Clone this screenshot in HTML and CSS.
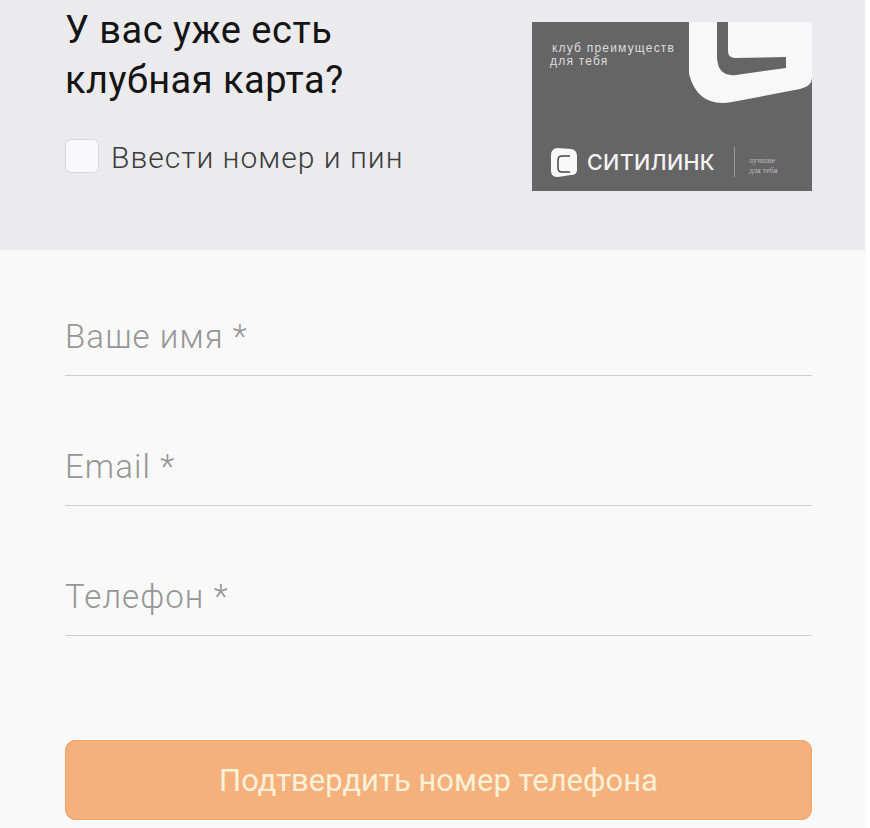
FILE: index.html
```html
<!DOCTYPE html>
<html lang="ru">
<head>
<meta charset="utf-8">
<title>Клубная карта</title>
<link rel="stylesheet" href="styles.css">
</head>
<body>
<main class="panel">
  <section class="club">
    <div class="club-text">
      <h2 class="club-title">У вас уже есть<br>клубная карта?</h2>
      <label class="check">
        <span class="check-box"></span>
        <span class="check-label">Ввести номер и пин</span>
      </label>
    </div>
    <svg class="card" viewBox="0 0 280 169" role="img" aria-label="Клубная карта Ситилинк">
      <rect width="280" height="169" fill="#666566"/>
      <path d="M157 0H280V56Q280 64 268 67L200 80Q166 86 157 52Z" fill="#f8f8f9"/>
      <path d="M185 0H196V29Q196 36 203 36L254 35V46L204 53Q185 55 185 34Z" fill="#666566"/>
      <text x="20" y="30" class="card-small">клуб преимуществ</text>
      <text x="18" y="43" class="card-small">для тебя</text>
      <path d="M19 134Q19 126 26 126L39 127Q45 128 45 134V148Q45 153 39 153L26 155Q19 155 19 149Z" fill="#f8f8f9"/>
      <path d="M38 134H30Q26 134 26 138V146Q26 150 30 150H38" fill="none" stroke="#444" stroke-width="1.500"/>
      <text x="55" y="148" class="card-brand">СИТИЛИНК</text>
      <path d="M202.500 125V155" stroke="#9c9b9c" stroke-width="1"/>
      <text x="217" y="141" class="card-tiny">лучшие</text>
      <text x="217" y="151" class="card-tiny">для тебя</text>
    </svg>
  </section>
  <form class="fields">
    <div class="field"><span class="placeholder">Ваше имя *</span></div>
    <div class="field"><span class="placeholder">Email *</span></div>
    <div class="field"><span class="placeholder">Телефон *</span></div>
    <div class="submit">Подтвердить номер телефона</div>
  </form>
</main>
</body>
</html>
```
FILE: styles.css
```css
html, body {
  margin: 0;
  padding: 0;
  background: #ffffff;
}
body {
  height: 828px;
  overflow: hidden;
  font-family: Roboto, "Liberation Sans", sans-serif;
}
.panel {
  width: 865px;
  height: 828px;
  background: #f9f9f9;
}
.club {
  height: 250px;
  box-sizing: border-box;
  padding: 22px 53px 0 65px;
  background: #ebebed;
  box-shadow: 0 1px 3px #f1f1f2;
  display: flex;
  justify-content: space-between;
  align-items: flex-start;
}
.club-title {
  margin: -17px 0 0;
  font-size: 38px;
  line-height: 50px;
  font-weight: 400;
  letter-spacing: 0.500px;
  color: #141414;
}
.check {
  display: flex;
  align-items: flex-start;
  gap: 12px;
  margin-top: 34px;
}
.check-box {
  width: 34px;
  height: 34px;
  box-sizing: border-box;
  border: 1px solid #d6d6d8;
  border-radius: 6px;
  background: #f8f7f9;
}
.check-label {
  padding-top: 2px;
  font-size: 30px;
  line-height: 34px;
  font-weight: 300;
  letter-spacing: 1px;
  color: #3c3c3c;
}
.card {
  width: 280px;
  height: 169px;
  display: block;
  flex: none;
}
.card-small {
  font: 400 12px "Liberation Sans", sans-serif;
  letter-spacing: 1.200px;
  fill: #dcdcdc;
}
.card-brand {
  font: 500 21.500px Inter, sans-serif;
  letter-spacing: 0.300px;
  fill: #f4f4f4;
}
.card-tiny {
  font: 400 8px "Liberation Serif", serif;
  fill: #bdbdbd;
}
.fields {
  display: flex;
  flex-direction: column;
  padding: 0 53px 0 65px;
}
.field {
  height: 126px;
  margin-bottom: 4px;
  box-sizing: border-box;
  border-bottom: 1.500px solid #cfcfcf;
  display: flex;
  align-items: flex-end;
  padding-bottom: 16px;
}
.placeholder {
  font-size: 33px;
  line-height: 44px;
  font-weight: 300;
  letter-spacing: 1.100px;
  color: #969696;
}
.submit {
  margin-top: 100px;
  height: 80px;
  border-radius: 11px;
  background: #f5b17b;
  box-shadow: inset 0 0 0 1px #eda76f;
  display: flex;
  align-items: center;
  justify-content: center;
  font-size: 31px;
  color: #fdf0d8;
}
```
